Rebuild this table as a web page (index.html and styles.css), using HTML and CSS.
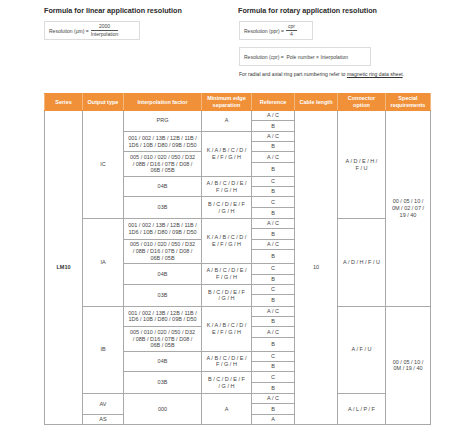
FILE: index.html
```html
<!DOCTYPE html>
<html>
<head>
<meta charset="utf-8">
<link rel="stylesheet" href="styles.css">
</head>
<body>
<div class="page">
  <div class="formulas">
    <div class="col col-left">
      <h2 class="title">Formula for linear application resolution</h2>
      <div class="box box-linear">
        <span class="label">Resolution (µm) =</span>
        <span class="frac"><span class="num">2000</span><span class="den">Interpolation</span></span>
      </div>
    </div>
    <div class="col col-right">
      <h2 class="title">Formula for rotary application resolution</h2>
      <div class="box box-ppr">
        <span class="label">Resolution (ppr) =</span>
        <span class="frac frac-small"><span class="num">cpr</span><span class="den">4</span></span>
      </div>
      <div class="box box-cpr">
        <span class="label">Resolution (cpr) =&nbsp; Pole number × Interpolation</span>
      </div>
      <p class="note">For radial and axial ring part numbering refer to <a class="link" href="#">magnetic ring data sheet</a>.</p>
    </div>
  </div>

  <table class="spec">
    <colgroup>
      <col class="c-series"><col class="c-out"><col class="c-interp"><col class="c-edge"><col class="c-ref"><col class="c-cable"><col class="c-conn"><col class="c-spec">
    </colgroup>
    <thead>
      <tr class="head">
        <th>Series</th>
        <th>Output type</th>
        <th>Interpolation factor</th>
        <th>Minimum edge<br>separation</th>
        <th>Reference</th>
        <th>Cable length</th>
        <th>Connector<br>option</th>
        <th>Special<br>requirements</th>
      </tr>
    </thead>
    <tbody>
      <tr class="r">
        <td rowspan="29" class="series">LM10</td>
        <td rowspan="10">IC</td>
        <td rowspan="2">PRG</td>
        <td rowspan="2">A</td>
        <td class="ref">A / C</td>
        <td rowspan="29">10</td>
        <td rowspan="10">A / D / E / H /<br>F / U</td>
        <td rowspan="18">00 / 05 / 10 /<br>0M / 02 / 07 /<br>19 / 40</td>
      </tr>
      <tr class="r"><td class="ref">B</td></tr>
      <tr class="r">
        <td rowspan="2">001 / 002 / 13B / 12B / 11B /<br>1D6 / 10B / D80 / 09B / D50</td>
        <td rowspan="4">K / A / B / C / D /<br>E / F / G / H</td>
        <td class="ref">A / C</td>
      </tr>
      <tr class="r"><td class="ref">B</td></tr>
      <tr class="r">
        <td rowspan="2">005 / 010 / 020 / 050 / D32<br>/ 08B / D16 / 07B / D08 /<br>06B / 05B</td>
        <td class="ref">A / C</td>
      </tr>
      <tr class="t"><td class="ref">B</td></tr>
      <tr class="r">
        <td rowspan="2">04B</td>
        <td rowspan="2">A / B / C / D / E /<br>F / G / H</td>
        <td class="ref">C</td>
      </tr>
      <tr class="r"><td class="ref">B</td></tr>
      <tr class="r">
        <td rowspan="2">03B</td>
        <td rowspan="2">B / C / D / E / F<br>/ G / H</td>
        <td class="ref">C</td>
      </tr>
      <tr class="m"><td class="ref">B</td></tr>

      <tr class="r">
        <td rowspan="8">IA</td>
        <td rowspan="2">001 / 002 / 13B / 12B / 11B /<br>1D6 / 10B / D80 / 09B / D50</td>
        <td rowspan="4">K / A / B / C / D /<br>E / F / G / H</td>
        <td class="ref">A / C</td>
        <td rowspan="8" class="top">A / D / H / F / U</td>
      </tr>
      <tr class="r"><td class="ref">B</td></tr>
      <tr class="r">
        <td rowspan="2">005 / 010 / 020 / 050 / D32<br>/ 08B / D16 / 07B / D08 /<br>06B / 05B</td>
        <td class="ref">A / C</td>
      </tr>
      <tr class="t"><td class="ref">B</td></tr>
      <tr class="r">
        <td rowspan="2">04B</td>
        <td rowspan="2">A / B / C / D / E /<br>F / G / H</td>
        <td class="ref">C</td>
      </tr>
      <tr class="r"><td class="ref">B</td></tr>
      <tr class="r">
        <td rowspan="2">03B</td>
        <td rowspan="2">B / C / D / E / F<br>/ G / H</td>
        <td class="ref">C</td>
      </tr>
      <tr class="m"><td class="ref">B</td></tr>

      <tr class="r">
        <td rowspan="8">IB</td>
        <td rowspan="2">001 / 002 / 13B / 12B / 11B /<br>1D6 / 10B / D80 / 09B / D50</td>
        <td rowspan="4">K / A / B / C / D /<br>E / F / G / H</td>
        <td class="ref">A / C</td>
        <td rowspan="8">A / F / U</td>
        <td rowspan="11">00 / 05 / 10 /<br>0M / 19 / 40</td>
      </tr>
      <tr class="r"><td class="ref">B</td></tr>
      <tr class="r">
        <td rowspan="2">005 / 010 / 020 / 050 / D32<br>/ 08B / D16 / 07B / D08 /<br>06B / 05B</td>
        <td class="ref">A / C</td>
      </tr>
      <tr class="t"><td class="ref">B</td></tr>
      <tr class="r">
        <td rowspan="2">04B</td>
        <td rowspan="2">A / B / C / D / E /<br>F / G / H</td>
        <td class="ref">C</td>
      </tr>
      <tr class="r"><td class="ref">B</td></tr>
      <tr class="r">
        <td rowspan="2">03B</td>
        <td rowspan="2">B / C / D / E / F<br>/ G / H</td>
        <td class="ref">C</td>
      </tr>
      <tr class="m"><td class="ref">B</td></tr>

      <tr class="r">
        <td rowspan="2">AV</td>
        <td rowspan="3">000</td>
        <td rowspan="3">A</td>
        <td class="ref">A / C</td>
        <td rowspan="3">A / L / P / F</td>
      </tr>
      <tr class="r"><td class="ref">B</td></tr>
      <tr class="r">
        <td>AS</td>
        <td class="ref">A</td>
      </tr>
    </tbody>
  </table>
</div>
</body>
</html>
```

FILE: styles.css
```css
html, body {
  margin: 0;
  padding: 0;
  background: #ffffff;
}

body {
  font-family: "Liberation Sans", Arial, sans-serif;
  color: #333333;
}

.page {
  width: 474px;
  box-sizing: border-box;
  padding: 7px 0 0 44px;
}

.formulas {
  display: flex;
}

.col-left {
  width: 194px;
  flex: none;
}

.col-right {
  flex: none;
}

.title {
  margin: 0;
  font-size: 7.2px;
  line-height: 8px;
  font-weight: bold;
  color: #2b2b2b;
  white-space: nowrap;
}

.box {
  margin-top: 6px;
  height: 19px;
  box-sizing: border-box;
  border: 1px solid #dcdcdc;
  display: flex;
  align-items: center;
  padding-left: 4px;
  font-size: 5px;
  color: #444444;
  white-space: nowrap;
}

.box-linear {
  width: 96px;
}

.box-ppr {
  width: 74px;
  margin-left: 1px;
}

.box-cpr {
  width: 132px;
  margin-left: 1px;
  margin-top: 7px;
}

.label {
  line-height: 6px;
}

.frac {
  display: inline-flex;
  flex-direction: column;
  align-items: center;
  margin-left: 2px;
  line-height: 5.5px;
}

.num {
  padding: 0 1px 0.5px;
  border-bottom: 0.6px solid #555555;
  align-self: stretch;
  text-align: center;
}

.den {
  padding-top: 0.5px;
}

.frac-small .num {
  padding: 0 2px 0.5px;
}

.note {
  margin: 5px 0 0 1px;
  font-size: 5.1px;
  line-height: 6px;
  color: #333333;
  white-space: nowrap;
}

.link {
  color: #333333;
  text-decoration: underline;
}

.spec {
  margin-top: 16px;
  border-collapse: collapse;
  table-layout: fixed;
  width: 386px;
  font-size: 5.5px;
  line-height: 6.7px;
  color: #444444;
  border: 1px solid #9a9a9a;
}

.c-series { width: 38px; }
.c-out { width: 41px; }
.c-interp { width: 78px; }
.c-edge { width: 50px; }
.c-ref { width: 43px; }
.c-cable { width: 43px; }
.c-conn { width: 48px; }
.c-spec { width: 45px; }

.spec th {
  background: #f0913a;
  color: #ffffff;
  font-weight: bold;
  height: 16px;
  padding: 0 1px;
  border: 1px solid #f0913a;
  border-left-color: #f5b77c;
  border-right-color: #f5b77c;
  text-align: center;
  vertical-align: middle;
}

.spec td {
  padding: 0 1px;
  border: 1px solid #a9a9a9;
  text-align: center;
  vertical-align: middle;
  white-space: nowrap;
}

.spec .series {
  font-weight: bold;
  color: #333333;
}

.spec tr.r { height: 10.35px; }
.spec tr.t { height: 14px; }
.spec tr.m { height: 11.4px; }
```
